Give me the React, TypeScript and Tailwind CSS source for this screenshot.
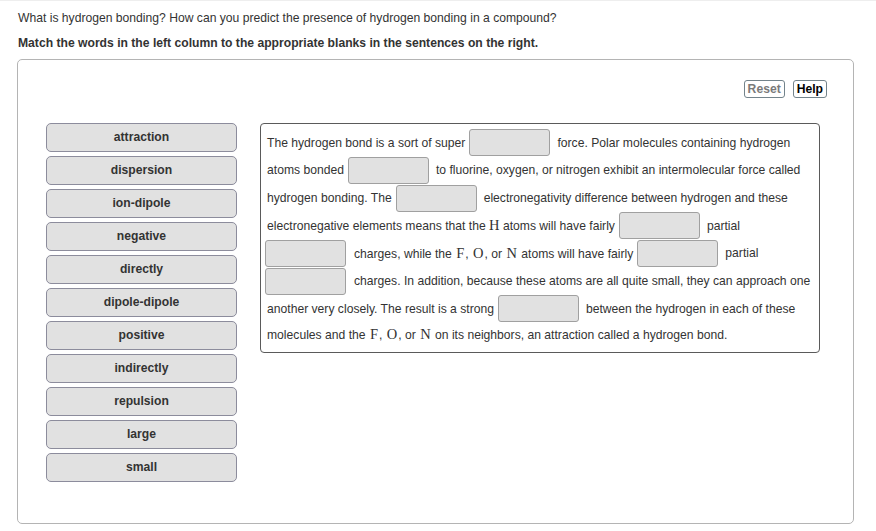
import React from "react";

const M = ({ c, wide = false }: { c: string; wide?: boolean }) => (
  <span className={`font-['Liberation_Serif','Times_New_Roman',serif] text-[14.5px] ${wide ? "px-[1px]" : ""}`}>{c}</span>
);

const Blank = ({ cls = "" }: { cls?: string }) => (
  <span className={`inline-block w-[81px] h-[27px] shrink-0 rounded-[3px] border border-[#a0a0a0] bg-[#e1e1e1] ${cls}`} />
);

const Row = ({ children, last = false }: { children: React.ReactNode; last?: boolean }) => (
  <div className={`flex items-center whitespace-nowrap ${last ? "h-[25px]" : "h-[27.7px]"}`}>{children}</div>
);

const words = [
  "attraction",
  "dispersion",
  "ion-dipole",
  "negative",
  "directly",
  "dipole-dipole",
  "positive",
  "indirectly",
  "repulsion",
  "large",
  "small",
];

export default function App() {
  return (
    <div className="w-[876px] h-[531px] bg-white border-t border-[#eeeeee] font-['Liberation_Sans',Arial,sans-serif] text-[12.15px] text-[#333]">
      <div className="pt-[9px] pl-[18px]">
        <p className="leading-[16px]">
          What is hydrogen bonding? How can you predict the presence of hydrogen bonding in a compound?
        </p>
        <p className="mt-[9px] leading-[16px] font-bold">
          Match the words in the left column to the appropriate blanks in the sentences on the right.
        </p>
      </div>
      <div className="ml-[17px] mt-[8px] w-[837px] h-[465px] rounded-[5px] border border-[#b4b4b4] pt-[20px] pr-[26px] pl-[28px]">
        <div className="flex justify-end gap-[8px]">
          <button className="h-[18px] px-[3px] rounded-[3px] border border-[#73838b] bg-white font-bold text-[12.15px] leading-[16px] text-[#7a7a7a]">
            Reset
          </button>
          <button className="h-[18px] px-[3px] rounded-[3px] border border-[#73838b] bg-white font-bold text-[12.15px] leading-[16px] text-black">
            Help
          </button>
        </div>
        <div className="mt-[25px] flex gap-[23px]">
          <div className="flex flex-col gap-[4px]">
            {words.map((w) => (
              <div
                key={w}
                className="w-[191px] h-[29px] flex items-center justify-center rounded-[5px] border border-[#8c8c9c] bg-[#e1e1e1] font-bold text-[#333]"
              >
                {w}
              </div>
            ))}
          </div>
          <div className="w-[560px] h-[230px] rounded-[4px] border border-[#5a5a5a] pt-[5px] pb-[4px] pl-[4px]">
            <Row>
              <span className="ml-[2px]">The hydrogen bond is a sort of super</span>
              <Blank cls="ml-[4px]" />
              <span className="ml-[7px]">force. Polar molecules containing hydrogen</span>
            </Row>
            <Row>
              <span className="ml-[2px]">atoms bonded</span>
              <Blank cls="ml-[4px]" />
              <span className="ml-[7px]">to fluorine, oxygen, or nitrogen exhibit an intermolecular force called</span>
            </Row>
            <Row>
              <span className="ml-[2px]">hydrogen bonding. The</span>
              <Blank cls="ml-[4px]" />
              <span className="ml-[7px]">electronegativity difference between hydrogen and these</span>
            </Row>
            <Row>
              <span className="ml-[2px]">
                electronegative elements means that the <M c="H" /> atoms will have fairly
              </span>
              <Blank cls="ml-[4px]" />
              <span className="ml-[7px]">partial</span>
            </Row>
            <Row>
              <Blank />
              <span className="ml-[8px]">
                charges, while the <M c="F" wide />, <M c="O" wide />, or <M c="N" wide /> atoms will have fairly
              </span>
              <Blank cls="ml-[4px]" />
              <span className="ml-[7px]">partial</span>
            </Row>
            <Row>
              <Blank />
              <span className="ml-[8px]">
                charges. In addition, because these atoms are all quite small, they can approach one
              </span>
            </Row>
            <Row>
              <span className="ml-[2px]">another very closely. The result is a strong</span>
              <Blank cls="ml-[4px]" />
              <span className="ml-[7px]">between the hydrogen in each of these</span>
            </Row>
            <Row last>
              <span className="ml-[2px]">
                molecules and the <M c="F" wide />, <M c="O" wide />, or <M c="N" wide /> on its neighbors, an attraction called a hydrogen bond.
              </span>
            </Row>
          </div>
        </div>
      </div>
    </div>
  );
}
